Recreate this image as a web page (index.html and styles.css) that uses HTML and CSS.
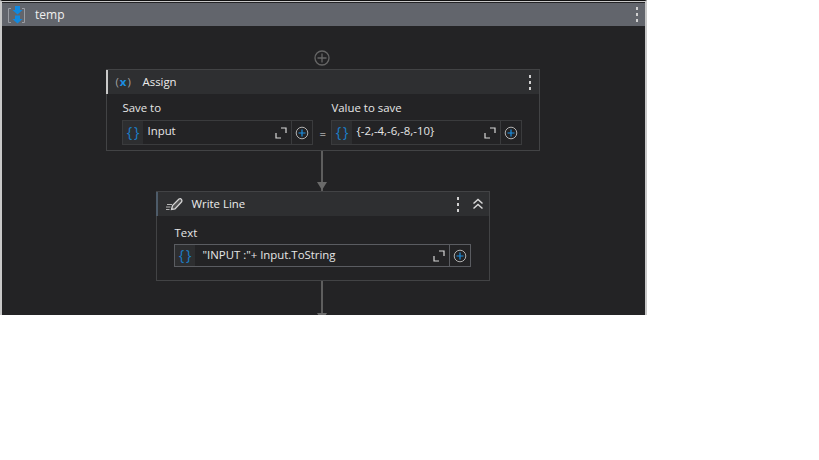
FILE: index.html
```html
<!DOCTYPE html>
<html lang="en">

<head>
    <meta charset="UTF-8">
    <title>temp</title>
    <link rel="stylesheet" href="styles.css">
</head>

<body>
    <div class="panel">
        <div class="panel-header">
            <svg class="seq-icon" width="24" height="23" viewBox="0 0 24 23">
                <path d="M4 5.500H1.500V19.500H4M15 5.500H17.500V19.500H15" fill="none" stroke="#9a9da3" stroke-width="1" />
                <path d="M8 3H13V7H15.500L10.500 11.500L5.500 7H8ZM8 12.500H13V16H15.500L10.500 20.500L5.500 16H8Z" fill="#1089e0" />
            </svg>
            <span class="panel-title">temp</span>
            <span class="dots"><i></i><i></i><i></i></span>
        </div>

        <div class="canvas">
            <svg class="add-btn" width="16" height="16" viewBox="0 0 16 16">
                <circle cx="8" cy="8" r="7" fill="none" stroke="#666" stroke-width="1.3" />
                <path d="M8 3.500V12.500M3.500 8H12.500" stroke="#666" stroke-width="1.3" />
            </svg>

            <!-- Assign -->
            <div class="card card-assign">
                <div class="card-header">
                    <span class="assign-icon">(<b>x</b>)</span>
                    <span class="card-title">Assign</span>
                    <span class="dots"><i></i><i></i><i></i></span>
                </div>
                <div class="assign-body">
                    <div class="field">
                        <div class="field-label">Save to</div>
                        <div class="input">
                            <span class="braces">{ }</span>
                            <span class="input-text">Input</span>
                            <svg class="expand" width="12" height="12" viewBox="0 0 12 12">
                                <path d="M1 6V11H6M6 1H11V6" fill="none" stroke="#d8d8d8" stroke-width="1.2" />
                            </svg>
                            <span class="plus-cell">
                                <svg width="14" height="14" viewBox="0 0 14 14">
                                    <circle cx="7" cy="7" r="5.800" fill="none" stroke="#b0b0b0" stroke-width="1" />
                                    <path d="M7 3.500V10.500M3.500 7H10.500" stroke="#1a8fe3" stroke-width="1.2" />
                                </svg>
                            </span>
                        </div>
                    </div>
                    <span class="equals">=</span>
                    <div class="field">
                        <div class="field-label">Value to save</div>
                        <div class="input">
                            <span class="braces">{ }</span>
                            <span class="input-text">{-2,-4,-6,-8,-10}</span>
                            <svg class="expand" width="12" height="12" viewBox="0 0 12 12">
                                <path d="M1 6V11H6M6 1H11V6" fill="none" stroke="#d8d8d8" stroke-width="1.2" />
                            </svg>
                            <span class="plus-cell">
                                <svg width="14" height="14" viewBox="0 0 14 14">
                                    <circle cx="7" cy="7" r="5.800" fill="none" stroke="#b0b0b0" stroke-width="1" />
                                    <path d="M7 3.500V10.500M3.500 7H10.500" stroke="#1a8fe3" stroke-width="1.2" />
                                </svg>
                            </span>
                        </div>
                    </div>
                </div>
            </div>

            <div class="connector connector-mid"><span class="arrow"></span></div>

            <!-- Write Line -->
            <div class="card card-write">
                <div class="card-header">
                    <svg class="write-icon" width="18" height="14" viewBox="0 0 18 14">
                        <path d="M2 7.500H7M1 10H5.500M1 12.500H4.500" stroke="#b5b5b5" stroke-width="1" />
                        <path d="M6.500 12.500L7.500 8.500L14 2Q15.500 1 16.500 2.500Q17.500 4 16 5.500L10 12Z" fill="#555" stroke="#d5d5d5" stroke-width="1.300" />
                    </svg>
                    <span class="card-title">Write Line</span>
                    <span class="dots"><i></i><i></i><i></i></span>
                    <svg class="collapse" width="12" height="12" viewBox="0 0 12 12">
                        <path d="M1.500 5.500L6 1.500L10.500 5.500M1.500 10.500L6 6.500L10.500 10.500" fill="none" stroke="#d8d8d8" stroke-width="1.500" />
                    </svg>
                </div>
                <div class="write-body">
                    <div class="field-label">Text</div>
                    <div class="input input-light">
                        <span class="braces">{ }</span>
                        <span class="input-text">"INPUT :"+ Input.ToString</span>
                        <svg class="expand" width="12" height="12" viewBox="0 0 12 12">
                            <path d="M1 6V11H6M6 1H11V6" fill="none" stroke="#d8d8d8" stroke-width="1.2" />
                        </svg>
                        <span class="plus-cell">
                            <svg width="14" height="14" viewBox="0 0 14 14">
                                <circle cx="7" cy="7" r="5.800" fill="none" stroke="#b0b0b0" stroke-width="1" />
                                <path d="M7 3.500V10.500M3.500 7H10.500" stroke="#1a8fe3" stroke-width="1.2" />
                            </svg>
                        </span>
                    </div>
                </div>
            </div>

            <div class="connector connector-end"><span class="arrow"></span></div>
        </div>
    </div>
</body>

</html>
```

FILE: styles.css
```css
body {
    margin: 0;
    background-color: #fff;
    font-family: "Open Sans", "Noto Sans", sans-serif;
    font-size: 11.4px;
    color: #e6e6e6;
}

.panel {
    width: 643px;
    height: 312px;
    background-color: #232325;
    border-top: 1px solid #111;
    border-left: 2px solid #c8c8c8;
    border-right: 2px solid #c8c8c8;
    box-shadow: inset 0 1px 0 #c8c8c8;
    padding-top: 2px;
    display: flex;
    flex-direction: column;
    overflow: hidden;
}

.panel-header {
    height: 23px;
    flex-shrink: 0;
    background-color: #62656c;
    display: flex;
    align-items: center;
    padding: 0 3px 0 5px;
}

.seq-icon {
    margin-right: 4px;
}

.panel-title {
    flex: 1;
    font-size: 12px;
    color: #f0f0f0;
}

.dots {
    display: flex;
    flex-direction: column;
    gap: 3px;
    width: 10px;
    align-items: center;
}

.dots i {
    width: 2px;
    height: 3px;
    background-color: #d0d0d0;
}

.canvas {
    flex: 1;
    display: flex;
    flex-direction: column;
    align-items: center;
    padding-top: 24px;
    padding-right: 2px;
}

.add-btn {
    margin-bottom: 3px;
    margin-left: -2px;
}

.card {
    flex-shrink: 0;
    border: 1px solid #424345;
    box-sizing: border-box;
}

.card-assign {
    width: 434px;
    height: 82px;
}

.card-write {
    width: 334px;
    height: 90px;
}

.card-header {
    height: 24px;
    background-color: #2e2f31;
    display: flex;
    align-items: center;
    padding-right: 4px;
}

.card-assign .card-header {
    border-left: 2px solid #c9c9c9;
    margin-left: -1px;
    padding-left: 8px;
}

.card-write .card-header {
    border-left: 2px solid #4d5b69;
    margin-left: -1px;
    padding-left: 7px;
}

.assign-icon {
    width: 27px;
    color: #a0a0a0;
    padding-bottom: 2px;
}

.assign-icon b {
    color: #1a8fe3;
    margin: 0 1px;
}

.write-icon {
    margin-right: 9px;
}

.card-title {
    flex: 1;
    color: #ececec;
    padding-bottom: 2px;
}

.collapse {
    margin-left: 9px;
    margin-right: 1px;
}

.assign-body {
    display: flex;
    align-items: flex-end;
    gap: 5px;
    padding: 4px 0 0 15px;
}

.field {
    width: 191px;
}

.field-label {
    height: 22px;
    line-height: 19px;
    padding-left: 1px;
    color: #e6e6e6;
}

.equals {
    width: 8px;
    text-align: center;
    text-indent: 2px;
    height: 25px;
    line-height: 28px;
}

.input {
    display: flex;
    align-items: center;
    height: 25px;
    box-sizing: border-box;
    border: 1px solid #3a3b3d;
}

.input-light {
    border-color: #5a5c61;
    width: 297px;
    height: 23px;
}

.braces {
    width: 20px;
    align-self: stretch;
    background-color: #2d2e30;
    color: #1b7fc9;
    font-size: 14.5px;
    letter-spacing: -1px;
    padding-bottom: 2px;
    box-sizing: border-box;
    display: flex;
    align-items: center;
    justify-content: center;
    margin-right: 5px;
}

.input-text {
    flex: 1;
    white-space: nowrap;
    padding-bottom: 4px;
}

.input-light .input-text {
    padding-left: 3px;
    padding-bottom: 2px;
}

.expand {
    margin-right: 4px;
}

.plus-cell {
    width: 21px;
    padding-left: 1px;
    box-sizing: border-box;
    align-self: stretch;
    border-left: 1px solid #3a3b3d;
    display: flex;
    align-items: center;
    justify-content: center;
}

.input-light .plus-cell {
    border-left-color: #5a5c61;
}

.write-body {
    padding: 7px 0 0 17px;
}

.write-body .field-label {
    height: 21px;
}

.connector {
    width: 2px;
    background-color: #5e5e5e;
    position: relative;
    flex-shrink: 0;
    margin-left: -2px;
}

.connector-mid {
    height: 40px;
}

.connector-end {
    height: 40px;
}

.arrow {
    position: absolute;
    left: -4px;
    bottom: 1px;
    width: 0;
    height: 0;
    border-left: 5px solid transparent;
    border-right: 5px solid transparent;
    border-top: 8px solid #6a6a6a;
}

.connector-end .arrow {
    bottom: 0;
}
```
